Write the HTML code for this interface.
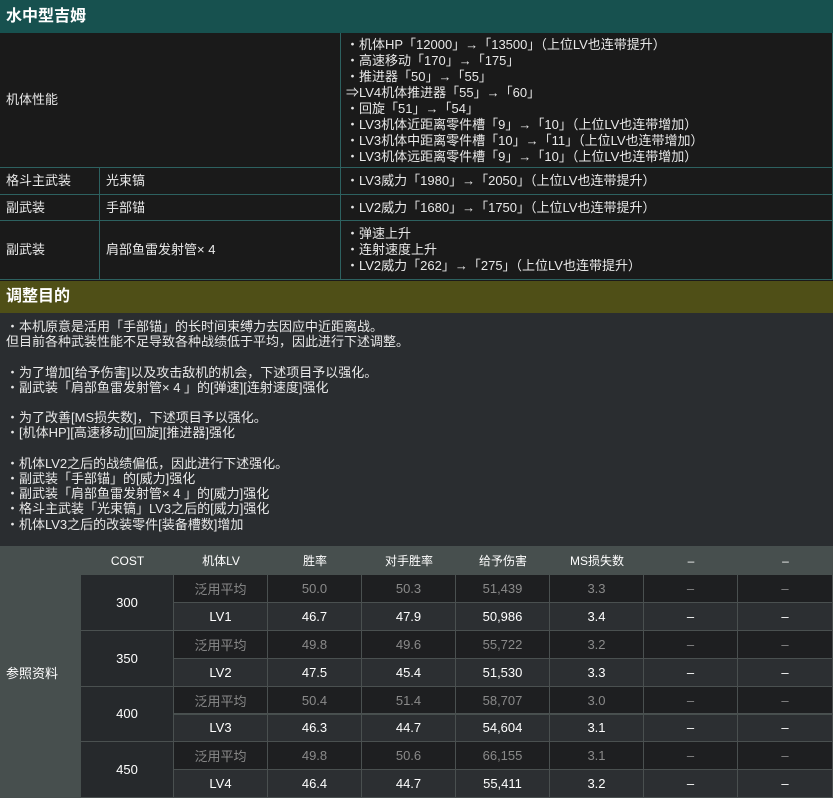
<!DOCTYPE html>
<html><head><meta charset="utf-8"><style>
*{margin:0;padding:0;box-sizing:border-box}
body{width:833px;height:798px;background:#1a1a1a;font-family:"Liberation Sans","Noto Sans CJK SC",sans-serif;color:#e8e8e8;font-size:13px;position:relative;overflow:hidden}
.a{position:absolute}
.h1{left:0;top:0;width:833px;height:33px;background:#17514f;color:#fff;font-weight:bold;font-size:16px;line-height:33px;padding-left:6px}
.c{position:absolute;background:#1a1a1a;border-right:1px solid #2d6160;border-bottom:1px solid #2d6160;padding-left:6px;display:flex;align-items:center;line-height:16px;white-space:nowrap}
.h2{left:0;top:281px;width:833px;height:32px;background:#4f4f17;color:#fff;font-weight:bold;font-size:16px;line-height:32px;padding-left:6px}
.txt{left:0;top:313px;width:833px;height:233px;background:#2a2d30;padding:6px 0 0 6px;line-height:15.2px;font-size:13px;white-space:nowrap}
.s{position:absolute;text-align:center;border-right:1px solid #4a5050;border-bottom:1px solid #4a5050;display:flex;align-items:center;justify-content:center}
</style></head><body>
<div class="a h1">水中型吉姆</div>
<div class="c" style="left:0;top:33px;width:341px;height:135px">机体性能</div>
<div class="c" style="left:341px;top:33px;width:492px;height:135px;align-items:flex-start;padding-top:4px;padding-left:5px">・机体HP「12000」→「13500」（上位LV也连带提升）<br>・高速移动「170」→「175」<br>・推进器「50」→「55」<br>⇒LV4机体推进器「55」→「60」<br>・回旋「51」→「54」<br>・LV3机体近距离零件槽「9」→「10」（上位LV也连带增加）<br>・LV3机体中距离零件槽「10」→「11」（上位LV也连带增加）<br>・LV3机体远距离零件槽「9」→「10」（上位LV也连带增加）</div>
<div class="c" style="left:0;top:168px;width:100px;height:27px">格斗主武装</div>
<div class="c" style="left:100px;top:168px;width:241px;height:27px">光束镐</div>
<div class="c" style="left:341px;top:168px;width:492px;height:27px;padding-left:5px">・LV3威力「1980」→「2050」（上位LV也连带提升）</div>
<div class="c" style="left:0;top:195px;width:100px;height:26px">副武装</div>
<div class="c" style="left:100px;top:195px;width:241px;height:26px">手部锚</div>
<div class="c" style="left:341px;top:195px;width:492px;height:26px;padding-left:5px">・LV2威力「1680」→「1750」（上位LV也连带提升）</div>
<div class="c" style="left:0;top:221px;width:100px;height:59px">副武装</div>
<div class="c" style="left:100px;top:221px;width:241px;height:59px">肩部鱼雷发射管× 4</div>
<div class="c" style="left:341px;top:221px;width:492px;height:59px;padding-left:5px">・弹速上升<br>・连射速度上升<br>・LV2威力「262」→「275」（上位LV也连带提升）</div>
<div class="a h2">调整目的</div>
<div class="a txt">・本机原意是活用「手部锚」的长时间束缚力去因应中近距离战。<br>但目前各种武装性能不足导致各种战绩低于平均，因此进行下述调整。<br><br>・为了增加[给予伤害]以及攻击敌机的机会，下述项目予以强化。<br>・副武装「肩部鱼雷发射管× 4 」的[弹速][连射速度]强化<br><br>・为了改善[MS损失数]，下述项目予以强化。<br>・[机体HP][高速移动][回旋][推进器]强化<br><br>・机体LV2之后的战绩偏低，因此进行下述强化。<br>・副武装「手部锚」的[威力]强化<br>・副武装「肩部鱼雷发射管× 4 」的[威力]强化<br>・格斗主武装「光束镐」LV3之后的[威力]强化<br>・机体LV3之后的改装零件[装备槽数]增加</div>
<div class="a" style="left:0;top:546px;width:833px;height:252px;background:#474f4e"></div>
<div class="a" style="left:0;top:546px;width:81px;height:252px;display:flex;align-items:center;padding-left:6px;color:#fff">参照资料</div>
<div id="st"></div>
<script>
var cols=[81,174,268,362,456,550,644,738,833];
var hd=["COST","机体LV","胜率","对手胜率","给予伤害","MS损失数","–","–"];
var h='';
for(var i=0;i<8;i++)h+='<div class="s" style="border:none;left:'+cols[i]+'px;top:546px;width:'+(cols[i+1]-cols[i])+'px;height:29px;color:#fff;font-size:12px">'+hd[i]+'</div>';
var data=[["300","50.0","50.3","51,439","3.3","LV1","46.7","47.9","50,986","3.4"],["350","49.8","49.6","55,722","3.2","LV2","47.5","45.4","51,530","3.3"],["400","50.4","51.4","58,707","3.0","LV3","46.3","44.7","54,604","3.1"],["450","49.8","50.6","66,155","3.1","LV4","46.4","44.7","55,411","3.2"]];
var rh=27.9;
for(var g=0;g<4;g++){var d=data[g];var t=575+g*2*rh;
h+='<div class="s" style="left:81px;top:'+t+'px;width:93px;height:'+(2*rh)+'px;background:#26292c;color:#fff;font-size:13px">'+d[0]+'</div>';
var r1=["泛用平均",d[1],d[2],d[3],d[4],"–","–"],r2=[d[5],d[6],d[7],d[8],d[9],"–","–"];
for(var i=0;i<7;i++){var l=cols[i+1],w=cols[i+2]-cols[i+1];
h+='<div class="s" style="left:'+l+'px;top:'+t+'px;width:'+w+'px;height:'+rh+'px;background:#1e1f21;color:#8a8a8a;font-size:13px">'+r1[i]+'</div>';
h+='<div class="s" style="left:'+l+'px;top:'+(t+rh)+'px;width:'+w+'px;height:'+rh+'px;background:#2c2f32;color:#fff;font-size:13px">'+r2[i]+'</div>';}}
document.getElementById('st').innerHTML=h;
</script>
</body></html>
